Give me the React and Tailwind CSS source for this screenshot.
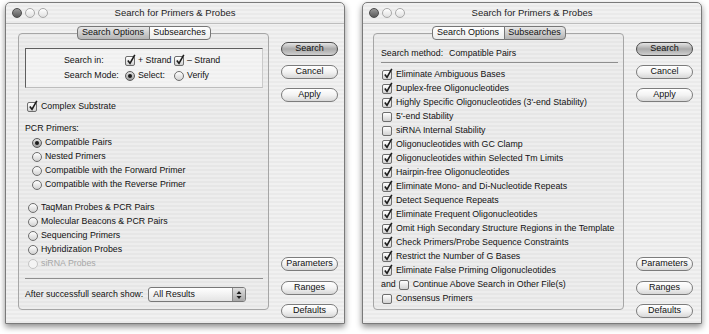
import React from 'react';

const stripes =
  'bg-[repeating-linear-gradient(180deg,#f1f1f1_0px,#f1f1f1_2px,#eaeaea_2px,#eaeaea_4px)]';

function Check({ checked }) {
  return (
    <span className="relative inline-block w-[10px] h-[10px] shrink-0 rounded-[2px] border border-[#6e6e6e] bg-linear-to-b from-white to-[#d2d2d2]">
      {checked && (
        <svg className="absolute -top-[3px] left-[0px] w-[10px] h-[11px]" viewBox="0 0 10 11">
          <path d="M1.8 6.5 L4 9.3 L8.8 0.8" fill="none" stroke="#1c1c1c" strokeWidth="1.6" />
        </svg>
      )}
    </span>
  );
}

function Radio({ on, disabled }) {
  return (
    <span
      className={`flex items-center justify-center w-[10px] h-[10px] shrink-0 rounded-full border ${
        disabled
          ? 'border-[#c4c4c4] bg-[#f4f4f4]'
          : on
          ? 'border-[#5a5a5a] bg-linear-to-b from-[#e2e2e2] to-[#9c9c9c]'
          : 'border-[#6e6e6e] bg-linear-to-b from-white to-[#d2d2d2]'
      }`}
    >
      {on && <span className="w-[4px] h-[4px] rounded-full bg-[#1a1a1a]" />}
    </span>
  );
}

function Row({ children, className = '' }) {
  return <div className={`flex items-center h-[14px] whitespace-nowrap ${className}`}>{children}</div>;
}

function Btn({ label, primary, className = '' }) {
  return (
    <div
      className={`flex items-center justify-center w-[57px] h-[14px] rounded-full border text-[9px] ${
        primary
          ? 'border-[#4a4a4a] bg-linear-to-b from-[#e6e6e6] via-[#a9a9a9] to-[#cfcfcf]'
          : 'border-[#7c7c7c] bg-linear-to-b from-white via-[#f3f3f3] to-[#d8d8d8]'
      } ${className}`}
    >
      {label}
    </div>
  );
}

function Tabs({ active }) {
  const base = 'flex items-center justify-center h-[14px] border border-[#767676] text-[9px]';
  const on = 'bg-linear-to-b from-[#e8e8e8] to-[#b4b4b4]';
  const off = 'bg-linear-to-b from-white to-[#ececec]';
  return (
    <div className="relative z-10 flex justify-center">
      <div className={`${base} w-[73px] rounded-l-[4px] ${active === 0 ? on : off}`}>Search Options</div>
      <div className={`${base} w-[62px] -ml-px rounded-r-[4px] ${active === 1 ? on : off}`}>Subsearches</div>
    </div>
  );
}

function Window({ children, tab, padLeft, className = '' }) {
  return (
    <div
      className={`w-[340px] h-[322px] flex flex-col rounded-t-[5px] border border-[#7a7a7a] shadow-[0_3px_6px_rgba(0,0,0,0.45)] ${stripes} ${className}`}
    >
      <div className="flex items-center h-[21px] shrink-0 border-b border-[#bdbdbd]">
        <div className="flex items-center gap-[3px] w-[60px] pl-[6px]">
          <span className="w-[10px] h-[10px] rounded-full border border-[#4c4c4c] bg-linear-to-b from-[#9a9a9a] to-[#5a5a5a]" />
          <span className="w-[10px] h-[10px] rounded-full border border-[#a8a8a8] bg-linear-to-b from-white to-[#e0e0e0]" />
          <span className="w-[10px] h-[10px] rounded-full border border-[#a8a8a8] bg-linear-to-b from-white to-[#e0e0e0]" />
        </div>
        <div className="flex-1 text-center text-[9.5px] text-[#1e1e1e]">Search for Primers &amp; Probes</div>
        <div className="w-[60px]" />
      </div>
      <div className={`flex pt-[2px] ${padLeft}`}>
        <div className="w-[251px] flex flex-col">
          <Tabs active={tab} />
          <div className="-mt-[7px] h-[277px] rounded-[4px] border border-[#a6a6a6] bg-black/[0.015]">
            {children}
          </div>
        </div>
        <div className="ml-[12px] flex flex-col pt-[16px]">
          <Btn label="Search" primary />
          <Btn label="Cancel" className="mt-[9px]" />
          <Btn label="Apply" className="mt-[9px]" />
          <Btn label="Parameters" className="mt-[155px]" />
          <Btn label="Ranges" className="mt-[10px]" />
          <Btn label="Defaults" className="mt-[9px]" />
        </div>
      </div>
    </div>
  );
}

function SearchOptions() {
  const pcr = ['Compatible Pairs', 'Nested Primers', 'Compatible with the Forward Primer', 'Compatible with the Reverse Primer'];
  const other = ['TaqMan Probes & PCR Pairs', 'Molecular Beacons & PCR Pairs', 'Sequencing Primers', 'Hybridization Probes'];
  return (
    <div className="pt-[14px] pl-[6px] pr-[5px] text-[8.8px]">
      <div className="h-[40px] pt-[5px] border border-t-[#5e5e5e] border-l-[#5e5e5e] border-r-[#cacaca] border-b-[#bdbdbd] bg-white/40">
        <div className="flex flex-col gap-[1px] pl-[38px]">
          <Row>
            <span className="w-[61px]">Search in:</span>
            <div className="flex items-center gap-[3px] w-[49px]">
              <Check checked />
              <span>+ Strand</span>
            </div>
            <div className="flex items-center gap-[3px]">
              <Check checked />
              <span>– Strand</span>
            </div>
          </Row>
          <Row>
            <span className="w-[61px]">Search Mode:</span>
            <div className="flex items-center gap-[3px] w-[49px]">
              <Radio on />
              <span>Select:</span>
            </div>
            <div className="flex items-center gap-[3px]">
              <Radio />
              <span>Verify</span>
            </div>
          </Row>
        </div>
      </div>
      <Row className="mt-[12px] gap-[4px] pl-[2px]">
        <Check checked />
        <span>Complex Substrate</span>
      </Row>
      <Row className="mt-[8px]">PCR Primers:</Row>
      <div className="pl-[7px]">
        {pcr.map((t, i) => (
          <Row key={t} className="gap-[3px]">
            <Radio on={i === 0} />
            <span>{t}</span>
          </Row>
        ))}
      </div>
      <div className="mt-[9px] pl-[3px]">
        {other.map(t => (
          <Row key={t} className="gap-[3px]">
            <Radio />
            <span>{t}</span>
          </Row>
        ))}
        <Row className="gap-[3px] text-[#a8a8a8]">
          <Radio disabled />
          <span>siRNA Probes</span>
        </Row>
      </div>
      <div className="mt-[7px] h-px bg-[#8e8e8e]" />
      <div className="mt-[8px] flex items-center h-[15px] gap-[5px] whitespace-nowrap">
        <span>After successfull search show:</span>
        <div className="flex w-[98px] h-[15px] rounded-[3px] border border-[#787878] bg-linear-to-b from-white to-[#e4e4e4]">
          <span className="flex-1 flex items-center pl-[4px]">All Results</span>
          <span className="flex items-center justify-center w-[13px] border-l border-[#8a8a8a] rounded-r-[2px] bg-linear-to-b from-[#e0e0e0] to-[#a8a8a8]">
            <svg width="6" height="10" viewBox="0 0 6 10">
              <path d="M3 1 L5.5 4 L0.5 4 Z M3 9 L5.5 6 L0.5 6 Z" fill="#1e1e1e" />
            </svg>
          </span>
        </div>
      </div>
    </div>
  );
}

function Subsearches() {
  const items = [
    ['Eliminate Ambiguous Bases', true],
    ['Duplex-free Oligonucleotides', true],
    ['Highly Specific Oligonucleotides (3\'-end Stability)', true],
    ['5\'-end Stability', false],
    ['siRNA Internal Stability', false],
    ['Oligonucleotides with GC Clamp', true],
    ['Oligonucleotides within Selected Tm Limits', true],
    ['Hairpin-free Oligonucleotides', true],
    ['Eliminate Mono- and Di-Nucleotide Repeats', true],
    ['Detect Sequence Repeats', true],
    ['Eliminate Frequent Oligonucleotides', true],
    ['Omit High Secondary Structure Regions in the Template', true],
    ['Check Primers/Probe Sequence Constraints', true],
    ['Restrict the Number of G Bases', true],
    ['Eliminate False Priming Oligonucleotides', true],
  ];
  return (
    <div className="pt-[13px] pl-[7px] pr-[5px] text-[8.8px]">
      <Row className="gap-[6px]">
        <span>Search method:</span>
        <span>Compatible Pairs</span>
      </Row>
      <div className="mt-[1px] h-px bg-[#8e8e8e]" />
      <div className="mt-[5px]">
        {items.map(([t, c]) => (
          <Row key={t} className="gap-[4px] pl-[1px]">
            <Check checked={c} />
            <span>{t}</span>
          </Row>
        ))}
        <Row className="gap-[3px]">
          <span>and</span>
          <Check />
          <span className="ml-[1px]">Continue Above Search in Other File(s)</span>
        </Row>
        <Row className="gap-[4px] pl-[1px]">
          <Check />
          <span>Consensus Primers</span>
        </Row>
      </div>
    </div>
  );
}

export default function App() {
  return (
    <div className="w-[709px] h-[334px] bg-white overflow-hidden font-['Liberation_Sans',Arial,sans-serif] text-[#111]">
      <div className="flex pt-[2px] pl-[5px] gap-[17px]">
        <Window tab={0} padLeft="pl-[12px]">
          <SearchOptions />
        </Window>
        <Window tab={1} padLeft="pl-[10px]">
          <Subsearches />
        </Window>
      </div>
    </div>
  );
}
